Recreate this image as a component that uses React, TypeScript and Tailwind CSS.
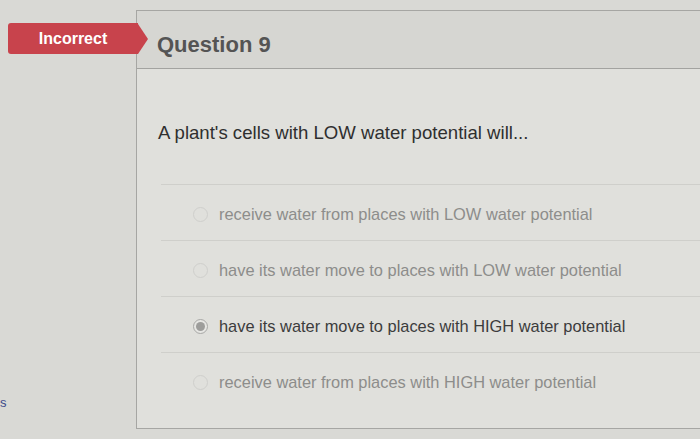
import React from 'react';

type Answer = { text: string; selected?: boolean };

const answers: Answer[] = [
  { text: 'receive water from places with LOW water potential' },
  { text: 'have its water move to places with LOW water potential' },
  { text: 'have its water move to places with HIGH water potential', selected: true },
  { text: 'receive water from places with HIGH water potential' },
];

const Radio = ({ selected }: { selected?: boolean }) => (
  <span
    className={
      'w-[15px] h-[15px] rounded-full border flex items-center justify-center shrink-0 ' +
      (selected ? 'border-[#a8a8a6] bg-[#e6e6e3]' : 'border-[#cfcfcc] bg-[#e0e0dc]')
    }
  >
    {selected && <span className="w-[9px] h-[9px] rounded-full bg-[#9d9d9b]" />}
  </span>
);

const App = () => {
  return (
    <div
      className="w-[700px] h-[439px] bg-[#d9d9d5] overflow-hidden relative flex pt-[10px]"
      style={{ fontFamily: '"Liberation Sans", Arial, sans-serif' }}
    >
      {/* left gutter */}
      <div className="w-[136px] shrink-0 relative flex flex-col justify-end pb-[30px]">
        <span className="text-[#3d4a8a] text-[13px] leading-none">s</span>
      </div>

      {/* question card */}
      <div className="flex-1 h-[419px] border-l border-t border-b border-[#a6a6a3] bg-[#e0e0dc] flex flex-col">
        <div className="h-[58px] bg-[#d6d6d2] border-b border-[#a3a3a0] flex items-center pl-[20px]">
          <h2 className="text-[22px] font-bold text-[#545454] mt-[9px]">Question 9</h2>
        </div>
        <div className="pl-[21px] pt-[53px]">
          <p className="text-[18.6px] text-[#2f2f2f] leading-[22px]">A plant's cells with LOW water potential will...</p>
        </div>
        <div className="pl-[24px] mt-[40px]">
          {answers.map((a, i) => (
            <div key={i} className="h-[56px] border-t border-[#cfcfcb] flex items-center pt-[4px] pl-[32px] gap-[11px]">
              <Radio selected={a.selected} />
              <span className={'text-[16.4px] ' + (a.selected ? 'text-[#3c3c3c]' : 'text-[#8d8d8b]')}>{a.text}</span>
            </div>
          ))}
        </div>
      </div>

      {/* incorrect tag */}
      <div className="absolute left-[8px] top-[23px] flex items-center">
        <div className="w-[130px] h-[31px] bg-[#c8434c] rounded-l-[3px] flex items-center justify-center">
          <span className="text-white text-[16px] font-bold">Incorrect</span>
        </div>
        <div className="w-0 h-0 border-t-[15.5px] border-b-[15.5px] border-l-[10px] border-t-transparent border-b-transparent border-l-[#c8434c]" />
      </div>
    </div>
  );
};

export default App;
